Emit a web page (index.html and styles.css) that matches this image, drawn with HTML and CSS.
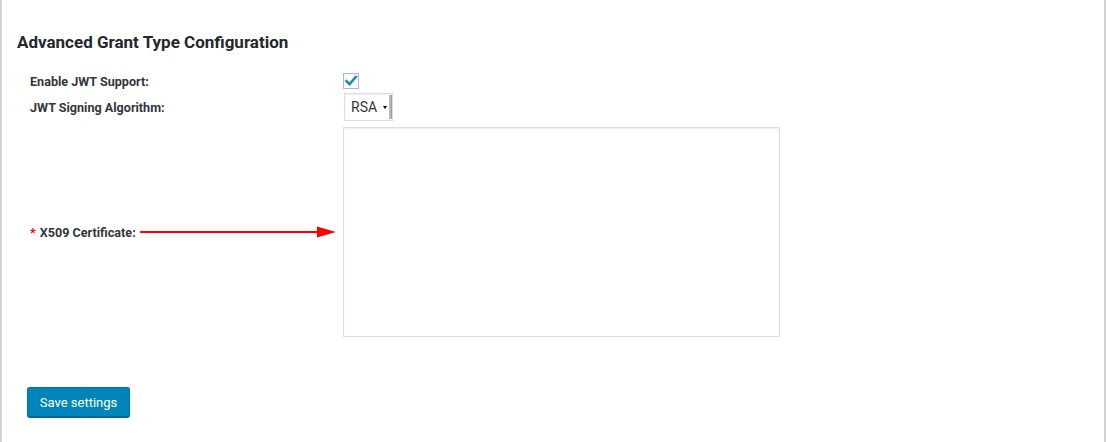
FILE: index.html
```html
<!DOCTYPE html>
<html>
<head>
<meta charset="utf-8">
<link rel="stylesheet" href="styles.css">
</head>
<body>
<div class="panel">
  <h2 class="title">Advanced Grant Type Configuration</h2>
  <div class="form">
    <div class="row row-check">
      <div class="label">Enable JWT Support:</div>
      <div class="field">
        <span class="checkbox">
          <svg width="14" height="14" viewBox="0 0 14 14"><path d="M2.5 7.2 L5.6 10.2 L11.8 3" fill="none" stroke="#1e8cbe" stroke-width="2.6" stroke-linecap="square"/></svg>
        </span>
      </div>
    </div>
    <div class="row row-select">
      <div class="label">JWT Signing Algorithm:</div>
      <div class="field">
        <span class="select"><span class="select-text">RSA</span><span class="select-caret"></span><span class="select-bar"></span></span>
      </div>
    </div>
    <div class="row row-text">
      <div class="label"><span class="req">*</span> X509 Certificate:
        <svg class="arrow" width="196" height="12" viewBox="0 0 196 12"><rect x="0" y="5" width="180" height="2" fill="#f00"/><path d="M177 0.5 L196 6 L177 11.5 Z" fill="#f00"/></svg>
      </div>
      <div class="field">
        <div class="textarea"></div>
      </div>
    </div>
  </div>
  <div class="actions">
    <button class="btn">Save settings</button>
  </div>
</div>
</body>
</html>
```
FILE: styles.css
```css
html, body {
  margin: 0;
  padding: 0;
  background: #fff;
}
body {
  font-family: Roboto, "Liberation Sans", Arial, sans-serif;
  color: #32373c;
}
.panel {
  box-sizing: border-box;
  height: 442px;
  border-left: 2px solid #d2d2d2;
  border-right: 2px solid #d2d2d2;
  padding: 31px 0 0 15px;
}
.title {
  margin: 0;
  font-size: 17px;
  line-height: 22px;
  font-weight: 700;
  color: #23282d;
}
.form {
  margin-top: 20px;
  padding-left: 13px;
}
.row {
  display: flex;
  align-items: center;
}
.label {
  width: 313px;
  flex: none;
  font-size: 12.6px;
  font-weight: 700;
  color: #32373c;
  display: flex;
  align-items: center;
}
.row-check { height: 16px; }
.row-select { margin-top: 4px; height: 28px; }
.row-text { margin-top: 6px; }
.checkbox {
  box-sizing: border-box;
  width: 16px;
  height: 16px;
  border: 1px solid #b4b9be;
  background: #fff;
  display: flex;
  align-items: center;
  justify-content: center;
  box-shadow: inset 0 1px 2px rgba(0,0,0,0.07);
}
.checkbox svg { display: block; }
.select {
  box-sizing: border-box;
  position: relative;
  margin-left: 1px;
  width: 49px;
  height: 28px;
  border: 1px solid #ddd;
  background: #fff;
  display: flex;
  align-items: center;
  box-shadow: inset 0 1px 2px rgba(0,0,0,0.07);
}
.select-text {
  font-size: 14px;
  color: #32373c;
  padding-left: 6px;
}
.select-caret {
  position: absolute;
  right: 5px;
  top: 12px;
  width: 0;
  height: 0;
  border-left: 2.5px solid transparent;
  border-right: 2.5px solid transparent;
  border-top: 3px solid #000;
}
.select-bar {
  position: absolute;
  right: 0;
  top: 1px;
  bottom: 1px;
  width: 3px;
  background: linear-gradient(to right, #c8c8c8, #9a9a9a);
}
.req {
  color: #f00;
  margin-right: 4px;
}
.arrow {
  display: block;
  margin-left: 4px;
}
.textarea {
  box-sizing: border-box;
  width: 437px;
  height: 210px;
  border: 1px solid #ddd;
  background: #fff;
  box-shadow: inset 0 1px 2px rgba(0,0,0,0.07);
}
.actions {
  margin-top: 50px;
  padding-left: 10px;
}
.btn {
  box-sizing: border-box;
  height: 30px;
  width: 103px;
  padding: 0;
  font-family: Roboto, "Liberation Sans", Arial, sans-serif;
  font-size: 13px;
  color: #fff;
  background: #0085ba;
  border: 1px solid #0073aa;
  border-bottom-color: #006799;
  border-radius: 3px;
  box-shadow: 0 1px 0 #006799;
  cursor: pointer;
}
```
